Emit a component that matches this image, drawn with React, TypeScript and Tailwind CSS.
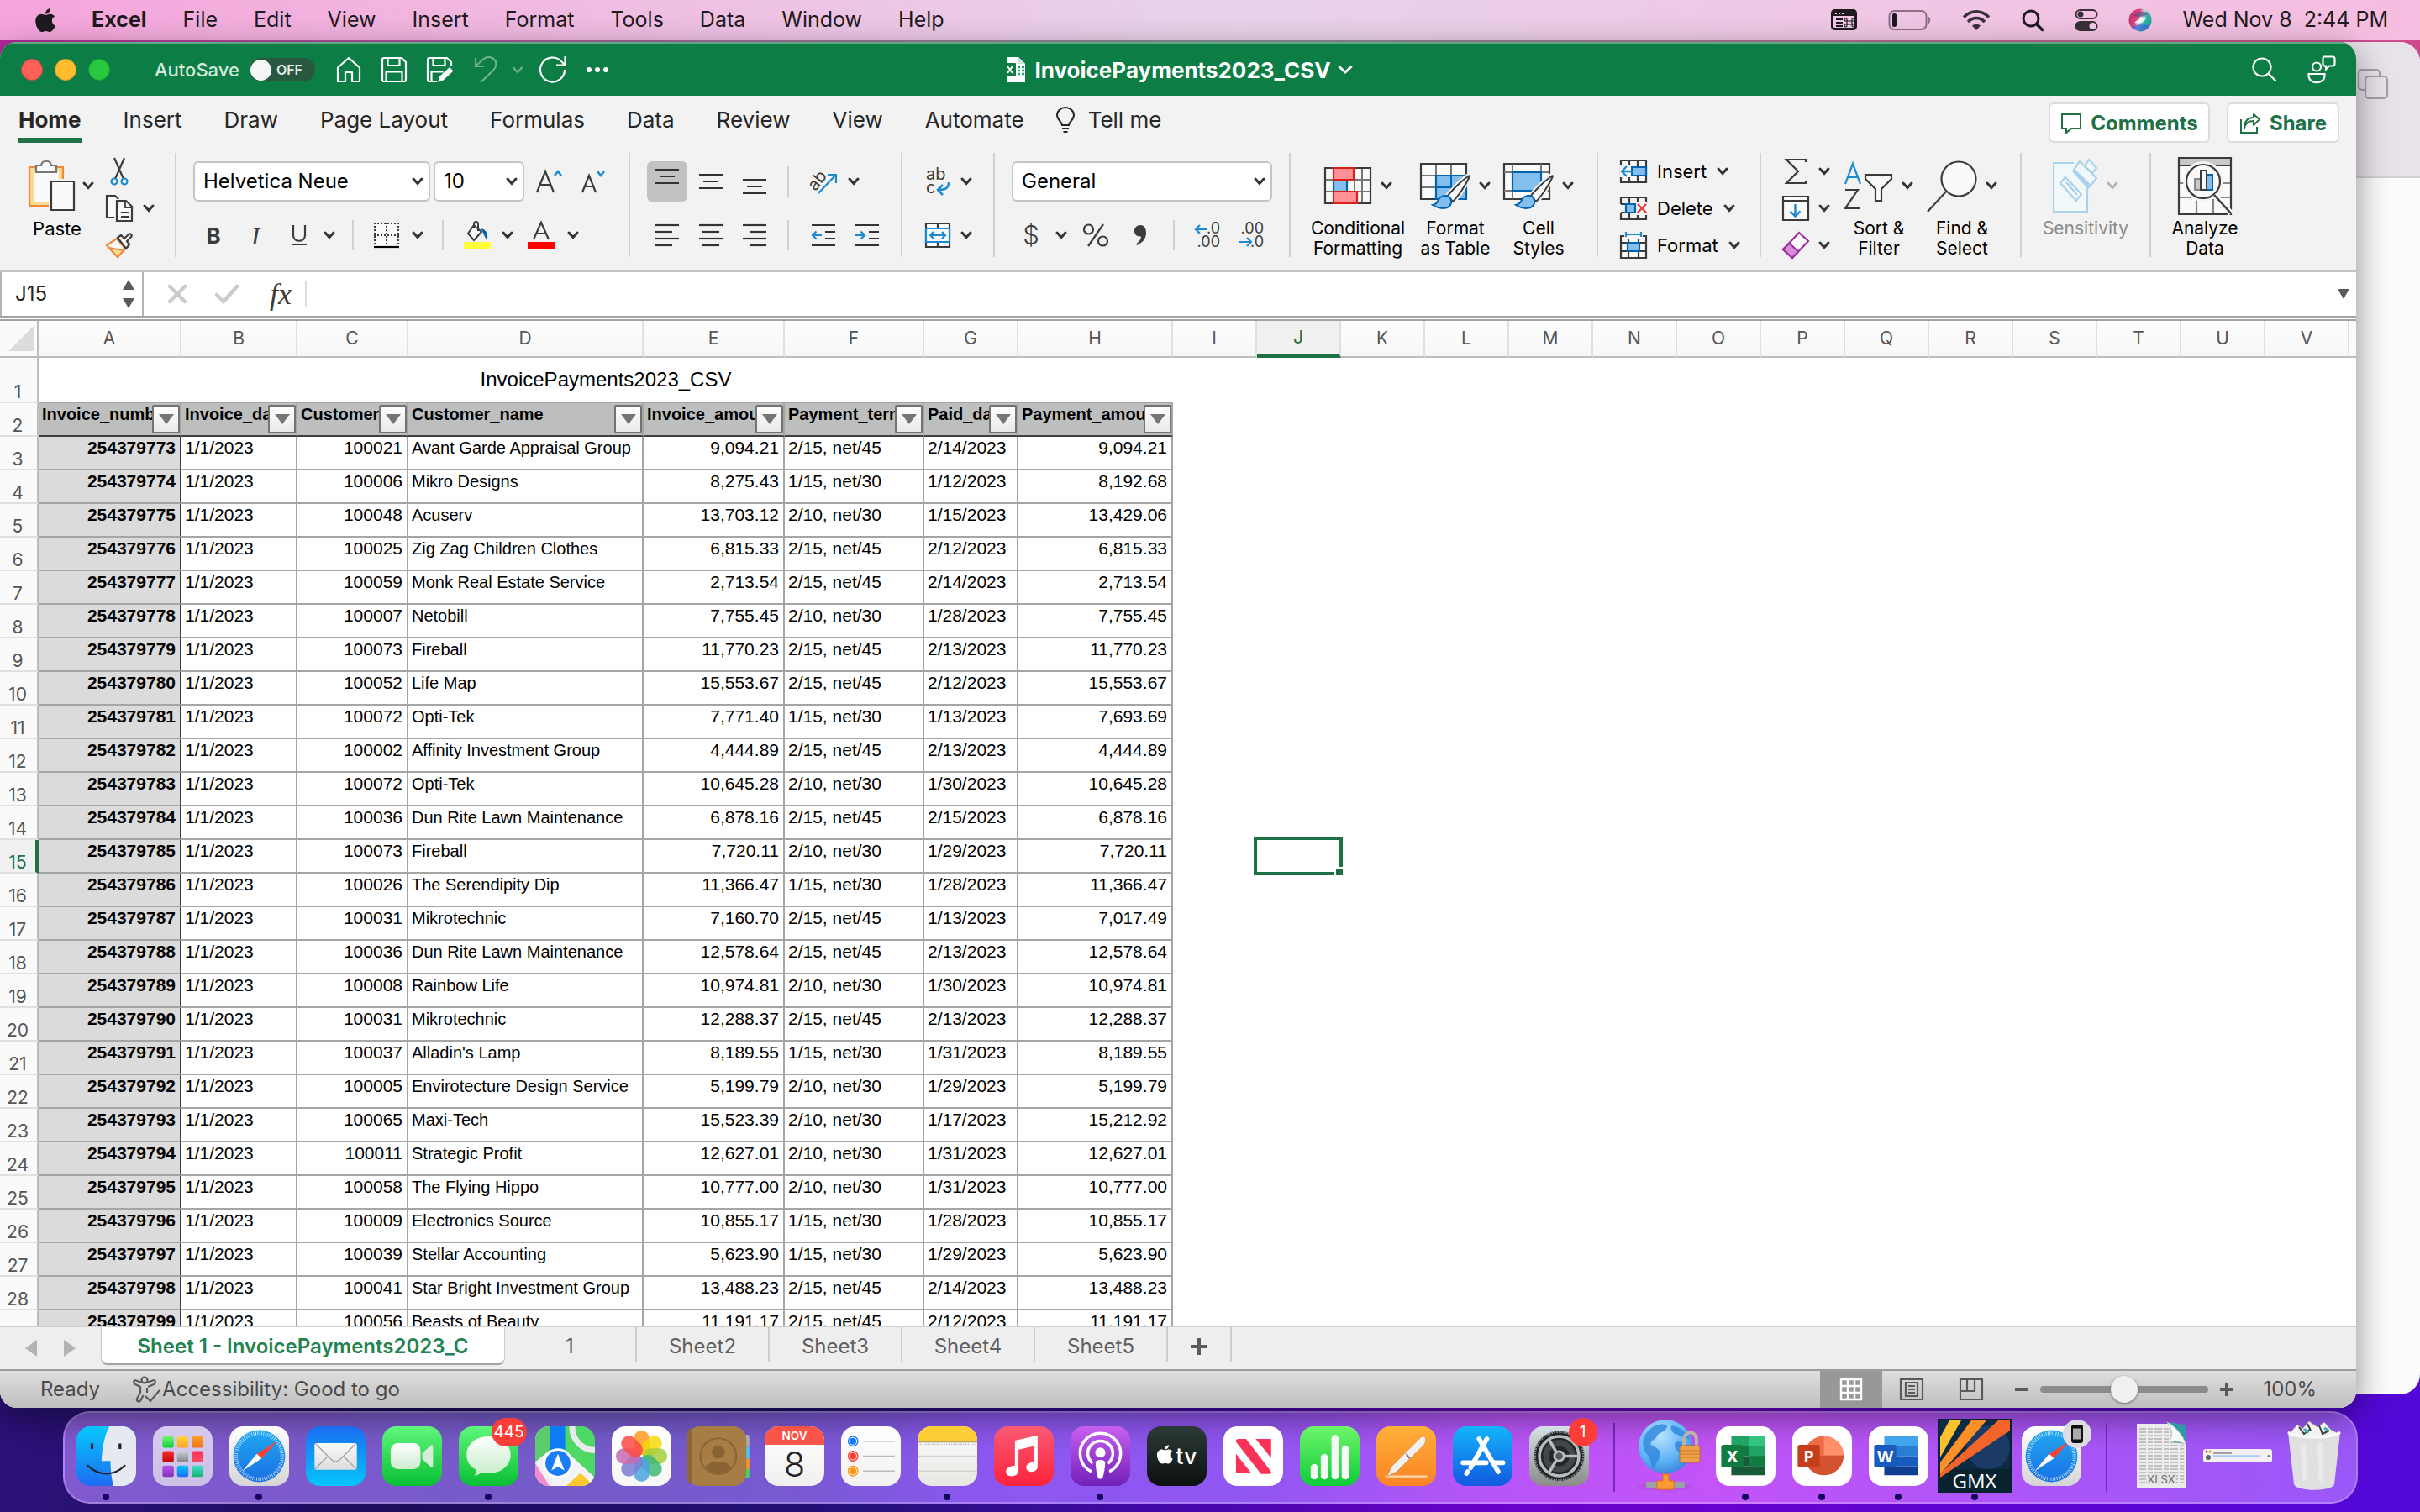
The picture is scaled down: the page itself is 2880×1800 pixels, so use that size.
import React from "react";
import { FaApple } from "react-icons/fa";

type Kids = { children?: React.ReactNode };

function Svg({ w, h, vb, label, children }: Kids & { w: number; h: number; vb?: string; label?: string }) {
  return (
    <svg
      width={w}
      height={h}
      viewBox={vb ?? `0 0 ${w} ${h}`}
      fill="none"
      className="shrink-0 overflow-visible"
      role={label ? "img" : undefined}
      aria-label={label}
      aria-hidden={label ? undefined : true}
    >
      {children}
    </svg>
  );
}

/* ------------------------------------------------------------------ */
/* Menu bar                                                            */
/* ------------------------------------------------------------------ */

const menus = ["File", "Edit", "View", "Insert", "Format", "Tools", "Data", "Window", "Help"];

function MenuBar() {
  return (
    <header className="flex h-12 shrink-0 items-center bg-linear-to-r from-[#f5a5db] via-[#e8d3ea] to-[#f5bde0] px-[38px] text-[25px] text-[#1f1a20]">
      <button aria-label="Apple menu" className="mr-[39px]">
        <FaApple size={32} />
      </button>
      <nav className="flex gap-[43px]">
        <button className="font-bold">Excel</button>
        {menus.map((m) => (
          <button key={m}>{m}</button>
        ))}
      </nav>
      <div className="ml-auto flex items-center gap-9">
        <Svg w={32} h={26} label="Keyboard viewer">
          <rect x="1.5" y="1.5" width="28" height="22" rx="3" stroke="#1f1a20" strokeWidth="3" />
          <path d="M2 2h28v6H2z" fill="#1f1a20" />
          <path d="M5 5h2M9 5h2M13 5h2" stroke="#f3d0e8" strokeWidth="2" />
          <path d="M6 12h8M6 16h8M6 20h8" stroke="#1f1a20" strokeWidth="2" />
          <path
            d="M19 14h6v4h-6zM19 14v-1.500a1.500 1.500 0 1 0-1.500 1.500zM25 14h1.500a1.500 1.500 0 1 0-1.500-1.500zM19 18v1.500a1.500 1.500 0 1 1-1.500-1.500zM25 18h1.500a1.500 1.500 0 1 1-1.500 1.500z"
            stroke="#1f1a20"
            strokeWidth="1.200"
          />
        </Svg>
        <Svg w={52} h={26} label="Battery">
          <rect x="1.500" y="2" width="44" height="22" rx="6" stroke="#8c7186" strokeWidth="2" />
          <rect x="5" y="5" width="5" height="16" rx="2" fill="#1f1a20" />
          <path d="M48 9c3 1 3 7 0 8z" fill="#8c7186" />
        </Svg>
        <Svg w={34} h={26} label="Wi-Fi">
          <path d="M2 9.500C11 .5 23 .5 32 9.500" stroke="#3a3038" strokeWidth="3.500" />
          <path d="M7 15c6-6 14-6 20 0" stroke="#3a3038" strokeWidth="3.500" />
          <path d="M17 25l-5-5.500c3-2.500 7-2.500 10 0z" fill="#3a3038" />
        </Svg>
        <Svg w={28} h={28} label="Search">
          <circle cx="12" cy="12" r="9" stroke="#1f1a20" strokeWidth="3" />
          <path d="M18.500 18.500l7 7" stroke="#1f1a20" strokeWidth="3.500" strokeLinecap="round" />
        </Svg>
        <Svg w={28} h={28} label="Control Center">
          <rect x="1.500" y="2" width="25" height="10" rx="5" stroke="#3a3038" strokeWidth="2" />
          <circle cx="7" cy="7" r="3.500" fill="#3a3038" />
          <rect x="0.500" y="15" width="27" height="12" rx="6" fill="#3a3038" />
          <circle cx="21.500" cy="21" r="4" fill="#f0cbe6" />
        </Svg>
        <Svg w={28} h={28} label="Siri">
          <defs>
            <linearGradient id="siri" x1="0" y1="0.3" x2="1" y2="0.7">
              <stop offset="0" stopColor="#c22d6e" />
              <stop offset="0.350" stopColor="#e0447e" />
              <stop offset="0.500" stopColor="#c9d4ea" />
              <stop offset="0.700" stopColor="#28b8a8" />
              <stop offset="1" stopColor="#2f8f98" />
            </linearGradient>
          </defs>
          <circle cx="14" cy="14" r="13.500" fill="url(#siri)" />
          <path d="M4 22c6 7 16 7 21-1-6-3-14-2-21 1z" fill="#3d6fd8" opacity="0.800" />
          <path d="M6 9c4-6 13-7 17-2-5 3-11 4-17 2z" fill="#5f4a78" opacity="0.700" />
          <path d="M7 17c4-4 10-7 14-6-1 5-8 8-14 6z" fill="#fff" opacity="0.850" />
        </Svg>
        <time className="whitespace-pre">Wed Nov 8  2:44 PM</time>
      </div>
    </header>
  );
}

/* ------------------------------------------------------------------ */
/* Title bar                                                           */
/* ------------------------------------------------------------------ */

function TitleBar() {
  return (
    <div className="flex h-16 shrink-0 items-center justify-between border-t-2 border-[#5fa883] bg-[#0b7d45] pr-6 pl-[25px] text-white">
      <div className="flex flex-1 items-center">
        <div className="flex gap-[14px]">
          <button aria-label="Close" className="size-[26px] rounded-full border border-[#d9463e] bg-[#ff5f57]" />
          <button aria-label="Minimize" className="size-[26px] rounded-full border border-[#d99b2b] bg-[#febc2e]" />
          <button aria-label="Full screen" className="size-[26px] rounded-full border border-[#18a033] bg-[#28c840]" />
        </div>
        <label htmlFor="autosave" className="ml-[53px] text-[22px] font-medium text-[#d3e9dc]">
          AutoSave
        </label>
        <span className="relative ml-3 flex h-7 w-[78px] items-center rounded-full bg-[#2a5740] px-px">
          <input id="autosave" type="checkbox" role="switch" className="absolute inset-0 size-full appearance-none" />
          <span className="size-[25px] rounded-full bg-[#f6f6f6]" />
          <span className="ml-[6px] text-[16px] font-semibold text-[#e3eee8]">OFF</span>
        </span>
        <div className="ml-6 flex items-center gap-[22px]">
          <button aria-label="Home">
            <Svg w={32} h={32}>
              <path d="M3 13.500L16 2l13 11.500V30h-9V19h-8v11H3z" stroke="#fff" strokeWidth="2.200" strokeLinejoin="round" />
            </Svg>
          </button>
          <button aria-label="Save">
            <Svg w={32} h={32}>
              <path d="M2 4a2 2 0 0 1 2-2h21l5 5v21a2 2 0 0 1-2 2H4a2 2 0 0 1-2-2z" stroke="#fff" strokeWidth="2.200" />
              <path d="M8.500 2v9h14V2M6.500 30V18.500h19V30" stroke="#fff" strokeWidth="2.200" />
            </Svg>
          </button>
          <button aria-label="Save as">
            <Svg w={34} h={32}>
              <path d="M13 30H4a2 2 0 0 1-2-2V4a2 2 0 0 1 2-2h21l5 5v5" stroke="#fff" strokeWidth="2.200" />
              <path d="M8.500 2v9h14V2M6.500 30V18.500h14" stroke="#fff" strokeWidth="2.200" />
              <path d="M14 31l2-7 12-11 4.500 4.500-12 11z" fill="#fff" />
            </Svg>
          </button>
          <button aria-label="Undo" className="flex items-center gap-4" disabled>
            <Svg w={30} h={34}>
              <path d="M3 3v10h10M3 13L12 4.500c8-6 17 0 15 8.500-1 3-3 5-18 19" stroke="#6bb08c" strokeWidth="2.200" />
            </Svg>
            <Svg w={14} h={10}>
              <path d="M1.500 2L7 8l5.500-6" stroke="#6bb08c" strokeWidth="2.500" />
            </Svg>
          </button>
          <button aria-label="Repeat" className="-ml-1">
            <Svg w={34} h={34}>
              <path d="M31 17a14.500 14.500 0 1 1-4-10l4 4M31.500 1v10.500H21" stroke="#fff" strokeWidth="2.200" />
            </Svg>
          </button>
          <button aria-label="More">
            <Svg w={28} h={8}>
              <circle cx="4" cy="4" r="3" fill="#fff" />
              <circle cx="14" cy="4" r="3" fill="#fff" />
              <circle cx="24" cy="4" r="3" fill="#fff" />
            </Svg>
          </button>
        </div>
      </div>
      <button className="flex items-center gap-[10px] text-[26px] font-bold">
        <Svg w={26} h={30}>
          <path d="M4 0h13l8 8v22H4z" fill="#fff" />
          <path d="M17 0v8h8z" fill="#cfe3d8" />
          <path d="M16 12h3M21 12h3M16 16h3M21 16h3M16 20h3M21 20h3" stroke="#21a366" strokeWidth="2.500" />
          <rect x="0" y="7" width="14" height="16" rx="1" fill="#107c41" />
          <path d="M4 11l6 8M10 11l-6 8" stroke="#fff" strokeWidth="2" />
        </Svg>
        <span className="flex items-center gap-2">
          InvoicePayments2023_CSV
          <Svg w={18} h={12}>
            <path d="M2 2.500L9 9l7-6.500" stroke="#fff" strokeWidth="3" strokeLinecap="round" />
          </Svg>
        </span>
      </button>
      <div className="flex flex-1 items-center justify-end gap-9">
        <button aria-label="Search">
          <Svg w={30} h={30}>
            <circle cx="12" cy="12" r="10.500" stroke="#fff" strokeWidth="2.200" />
            <path d="M20 20l8.500 8.500" stroke="#fff" strokeWidth="2.200" />
          </Svg>
        </button>
        <button aria-label="Share and comment">
          <Svg w={34} h={34}>
            <circle cx="11" cy="13.500" r="5" stroke="#fff" strokeWidth="2.200" />
            <path d="M1.500 22h19v2c0 11-19 11-19 0z" stroke="#fff" strokeWidth="2.200" />
            <path d="M20 1.500h10a2.500 2.500 0 0 1 2.500 2.500v6a2.500 2.500 0 0 1-2.500 2.500h-4l-4 4v-4h-2a2.500 2.500 0 0 1-1.500-2V4A2.500 2.500 0 0 1 20 1.500z" stroke="#fff" strokeWidth="2.200" />
          </Svg>
        </button>
      </div>
    </div>
  );
}

/* ------------------------------------------------------------------ */
/* Ribbon                                                              */
/* ------------------------------------------------------------------ */

const ribbonTabs = ["Home", "Insert", "Draw", "Page Layout", "Formulas", "Data", "Review", "View", "Automate"];

function RibbonTabs() {
  return (
    <div className="flex h-[68px] shrink-0 items-start pr-5 pl-[22px] text-[26px] text-[#262626]">
      <nav className="flex gap-[50px]">
        {ribbonTabs.map((t, i) => (
          <button
            key={t}
            className={
              i === 0
                ? "h-14 border-b-[6px] border-[#1e7145] pt-[7px] font-bold"
                : "h-14 border-b-[6px] border-transparent pt-[7px]"
            }
          >
            {t}
          </button>
        ))}
      </nav>
      <button className="ml-9 flex h-14 items-center gap-[14px] pt-px">
        <Svg w={26} h={32}>
          <path d="M9 22c0-4-6-6-6-12a10 9 0 0 1 20 0c0 6-6 8-6 12z" stroke="#262626" strokeWidth="2" />
          <path d="M9 26h8M10.500 30h5" stroke="#262626" strokeWidth="2.200" />
        </Svg>
        Tell me
      </button>
      <div className="mt-2 ml-auto flex gap-5 text-[24px] font-bold text-[#1e7145]">
        <button className="flex h-12 w-[192px] items-center justify-center gap-[10px] rounded-[6px] border-2 border-[#dcdcdc] bg-white pt-0.5">
          <Svg w={26} h={26}>
            <path d="M2 2h22v17H13l-6 5v-5H2z" stroke="#1e7145" strokeWidth="2" />
          </Svg>
          Comments
        </button>
        <button className="flex h-12 w-[134px] items-center justify-center gap-[10px] rounded-[6px] border-2 border-[#dcdcdc] bg-white pt-0.5">
          <Svg w={26} h={26}>
            <path d="M2 8v16h19v-7" stroke="#1e7145" strokeWidth="2" />
            <path d="M6 19c1-7 5-9 11-9v5l7-7-7-6v4C9 6 6 11 6 19z" stroke="#1e7145" strokeWidth="2" strokeLinejoin="round" />
          </Svg>
          Share
        </button>
      </div>
    </div>
  );
}

function Chevron({ color = "#333" }: { color?: string }) {
  return (
    <Svg w={14} h={10}>
      <path d="M2 2l5 5.500L12 2" stroke={color} strokeWidth="3" strokeLinecap="round" />
    </Svg>
  );
}

function Group({ className, children }: Kids & { className: string }) {
  return <div className={`flex h-[124px] shrink-0 border-r-2 border-[#d0d0d0] ${className}`}>{children}</div>;
}

function TwoRows({ children }: Kids) {
  return <div className="flex flex-col gap-4 pt-[10px]">{children}</div>;
}

function Row({ children, className = "" }: Kids & { className?: string }) {
  return <div className={`flex h-12 items-center ${className}`}>{children}</div>;
}

function Slot({ label, className, children }: Kids & { label: string; className: string }) {
  return (
    <button aria-label={label} className={`flex h-12 items-center justify-center ${className}`}>
      {children}
    </button>
  );
}

function Divider({ className }: { className: string }) {
  return <span className={`h-9 w-0.5 bg-[#d0d0d0] ${className}`} />;
}

function Picker({ label, value, className }: { label: string; value: string; className: string }) {
  return (
    <span className={`relative flex h-12 items-center ${className}`}>
      <select
        aria-label={label}
        defaultValue={value}
        className="size-full appearance-none rounded-[6px] border-2 border-[#c4c4c4] bg-white pl-[10px] text-[24px] text-black"
      >
        <option>{value}</option>
      </select>
      <span className="pointer-events-none absolute right-2">
        <Chevron />
      </span>
    </span>
  );
}

function BigButton({
  icon,
  lines,
  className,
  menu = true,
  disabled = false,
}: {
  icon: React.ReactNode;
  lines: string[];
  className: string;
  menu?: boolean;
  disabled?: boolean;
}) {
  return (
    <button
      disabled={disabled}
      className={`flex flex-col items-center text-[21px] leading-6 whitespace-nowrap ${disabled ? "text-[#8a8a8a]" : "text-black"} ${className}`}
    >
      <span className="flex h-[78px] shrink-0 items-center gap-[10px]">
        {icon}
        {menu && <Chevron color={disabled ? "#b5b5b5" : "#333"} />}
      </span>
      {lines.map((l) => (
        <span key={l}>{l}</span>
      ))}
    </button>
  );
}

/* Horizontal rules, each given as [x, y, width]. */
function Lines({ rows, h = 28 }: { rows: [number, number, number][]; h?: number }) {
  return (
    <Svg w={30} h={h}>
      {rows.map(([x, y, w], i) => (
        <path key={i} d={`M${x} ${y}h${w}`} stroke="#333" strokeWidth="2.200" />
      ))}
    </Svg>
  );
}

function PaintBrush() {
  return (
    <g transform="translate(14 9)">
      <path d="M44 0C34 7 22 20 18 25c2 1 5 3 7 6C31 25 40 12 44 2c1-2 1-2 0-2z" fill="#fafafa" stroke="#f0f0f0" strokeWidth="6" />
      <path d="M44 .5C34 7 22 20 18 25c2 1 5 3 7 6C31 25 40 12 44.500 2c.5-1.500.5-2-.5-1.500z" fill="#fafafa" stroke="#3b3b3b" strokeWidth="2" />
      <path d="M17 24c4 0 7 4 6 9-2 7-13 8-22 2 5-1 5-3 7-6 1-3 5-5 9-5z" fill="#83beec" stroke="#0063b1" strokeWidth="2" />
    </g>
  );
}

function RibbonGroups() {
  return (
    <div className="flex h-[142px] shrink-0 items-start border-b-2 border-[#c4c4c4]">
      <Group className="w-[210px] pl-[34px]">
        <button className="flex w-[78px] flex-col text-[22px] leading-6 text-black">
          <span className="flex h-[78px] items-center gap-2">
            <Svg w={56} h={62}>
              <path d="M1 9h40v46H1z" fill="#f8db8f" stroke="#f0883a" strokeWidth="2.200" />
              <path d="M6 13h30v37H6z" fill="#fafafa" />
              <path d="M9 15V7h6c1-7 11-7 12 0h6v8z" fill="#fafafa" stroke="#777" strokeWidth="2.200" />
              <path d="M24 23h32v39H24z" fill="#f2f2f2" />
              <path d="M27 26h27v34H27z" fill="#fafafa" stroke="#3b3b3b" strokeWidth="2.200" />
            </Svg>
            <Chevron />
          </span>
          <span className="w-[68px] text-center">Paste</span>
        </button>
        <div className="ml-[14px] flex flex-col">
          <button aria-label="Cut" className="flex h-11 w-8 shrink-0 items-center justify-center">
            <Svg w={22} h={34}>
              <path d="M5 1l11 25M17 1L6 26" stroke="#3b3b3b" strokeWidth="2.200" />
              <circle cx="5" cy="29" r="3.500" stroke="#1b8ad0" strokeWidth="2.200" />
              <circle cx="17" cy="29" r="3.500" stroke="#1b8ad0" strokeWidth="2.200" />
            </Svg>
          </button>
          <button aria-label="Copy" className="flex h-11 shrink-0 items-center gap-3">
            <Svg w={32} h={34}>
              <path d="M10 28H1V2h10l4 4" fill="#fafafa" stroke="#3b3b3b" strokeWidth="2.200" />
              <path d="M13 8h11l7 7v17H13z" fill="#fafafa" stroke="#3b3b3b" strokeWidth="2.200" />
              <path d="M23 8v8h8M18 22h9M18 27h9" stroke="#3b3b3b" strokeWidth="1.800" />
            </Svg>
            <Chevron />
          </button>
          <button aria-label="Format painter" className="flex h-11 w-8 shrink-0 items-center justify-center">
            <Svg w={32} h={30}>
              <path d="M1 15l12-8 10 12-9 10z" fill="#fafafa" stroke="#f0883a" strokeWidth="2.200" />
              <path d="M4 18l17 3-7 8z" fill="#f8db8f" stroke="#f0883a" strokeWidth="1.800" />
              <path d="M14 6l4-3 4 4 5-5c2-2 5 1 3 3l-5 5 3 4-4 5z" fill="#fafafa" stroke="#3b3b3b" strokeWidth="2.200" />
            </Svg>
          </button>
        </div>
      </Group>

      <Group className="w-[540px] pl-[20px]">
        <TwoRows>
          <Row>
            <Picker label="Font" value="Helvetica Neue" className="w-[282px]" />
            <Picker label="Font size" value="10" className="ml-1 w-[108px]" />
            <Slot label="Increase font size" className="ml-3 w-9">
              <Svg w={34} h={30}>
                <path d="M2 28L12 3l10 25M6 19h12" stroke="#3b3b3b" strokeWidth="2.200" />
                <path d="M23 8l4-5 4 5" stroke="#1b8ad0" strokeWidth="2.500" />
              </Svg>
            </Slot>
            <Slot label="Decrease font size" className="ml-4 w-9">
              <Svg w={30} h={30}>
                <path d="M2 28l8-20 8 20M5 21h10" stroke="#3b3b3b" strokeWidth="2.200" />
                <path d="M20 3l4 5 4-5" stroke="#1b8ad0" strokeWidth="2.500" />
              </Svg>
            </Slot>
          </Row>
          <Row className="text-[#3b3b3b]">
            <Slot label="Bold" className="w-12 text-[26px] font-bold">
              <span>B</span>
            </Slot>
            <Slot label="Italic" className="w-[52px] font-['Liberation_Serif'] text-[30px] italic">
              <span>I</span>
            </Slot>
            <Slot label="Underline" className="w-[52px]">
              <Svg w={20} h={30}>
                <path d="M3 3v12c0 9 14 9 14 0V3M1 26h18" stroke="#3b3b3b" strokeWidth="2.200" />
              </Svg>
            </Slot>
            <Slot label="Underline style" className="w-5">
              <Chevron />
            </Slot>
            <Divider className="mx-[17px]" />
            <Slot label="Borders" className="w-11">
              <Svg w={30} h={30}>
                <path d="M0 0h30v28H0z" fill="#fafafa" />
                <path d="M0 1h30M1 0v26M29 0v26M15 0v26M0 15h30" stroke="#3b3b3b" strokeWidth="2" strokeDasharray="2 2" />
                <path d="M0 29h30" stroke="#000" strokeWidth="2.200" />
              </Svg>
            </Slot>
            <Slot label="Border style" className="w-[30px]">
              <Chevron />
            </Slot>
            <Divider className="mx-[14px]" />
            <Slot label="Fill color" className="w-[52px]">
              <Svg w={32} h={34}>
                <path d="M12 5l9 8-9 10-7-8zM12 9V4c0-4 5-4 5 0v8" fill="#fafafa" stroke="#3b3b3b" strokeWidth="2" />
                <path d="M20 9c6 1 9 5 8 13-4-2-3-6-8-13z" fill="#0063b1" />
                <path d="M0 25h32v8H0z" fill="#ffff38" />
              </Svg>
            </Slot>
            <Slot label="Fill color menu" className="w-5">
              <Chevron />
            </Slot>
            <Slot label="Font color" className="w-[60px]">
              <Svg w={32} h={34}>
                <path d="M7 22l9-20 9 20M10.500 15h11" stroke="#3b3b3b" strokeWidth="2.200" />
                <path d="M0 25h32v8H0z" fill="#ff0000" />
              </Svg>
            </Slot>
            <Slot label="Font color menu" className="w-4">
              <Chevron />
            </Slot>
          </Row>
        </TwoRows>
      </Group>

      <Group className="w-[324px] pl-[18px]">
        <TwoRows>
          <Row>
            <Slot label="Align top" className="mx-0.5 w-12 rounded-[6px] bg-[#c2c2c2]">
              <Lines rows={[[1, 2, 28], [6, 10, 18], [1, 18, 28]]} h={32} />
            </Slot>
            <Slot label="Align middle" className="w-[52px]">
              <Lines rows={[[1, 8, 28], [6, 16, 18], [1, 24, 28]]} h={32} />
            </Slot>
            <Slot label="Align bottom" className="w-[52px]">
              <Lines rows={[[1, 14, 28], [6, 22, 18], [1, 30, 28]]} h={32} />
            </Slot>
            <Divider className="mx-[13px]" />
            <Slot label="Orientation" className="w-[56px]">
              <Svg w={34} h={32}>
                <text x="2" y="23" transform="rotate(-52 10 20)" fontSize="20" fill="#3b3b3b" fontFamily="Inter">
                  ab
                </text>
                <path d="M11 30L31 9M22 8h10v10" stroke="#1b8ad0" strokeWidth="2.200" />
              </Svg>
            </Slot>
            <Slot label="Orientation menu" className="w-4">
              <Chevron />
            </Slot>
          </Row>
          <Row>
            <Slot label="Align left" className="w-[52px]">
              <Lines rows={[[1, 2, 28], [1, 10, 20], [1, 18, 28], [1, 26, 20]]} />
            </Slot>
            <Slot label="Align center" className="w-[52px]">
              <Lines rows={[[1, 2, 28], [5, 10, 20], [1, 18, 28], [5, 26, 20]]} />
            </Slot>
            <Slot label="Align right" className="w-[52px]">
              <Lines rows={[[1, 2, 28], [9, 10, 20], [1, 18, 28], [9, 26, 20]]} />
            </Slot>
            <Divider className="mx-[13px]" />
            <Slot label="Decrease indent" className="w-[56px]">
              <Svg w={30} h={28}>
                <path d="M1 2h28M17 10h12M17 18h12M1 26h28" stroke="#333" strokeWidth="2.200" />
                <path d="M13 14H2M6.500 9.500L2 14l4.500 4.500" stroke="#1b8ad0" strokeWidth="2.200" />
              </Svg>
            </Slot>
            <Slot label="Increase indent" className="w-12">
              <Svg w={30} h={28}>
                <path d="M1 2h28M17 10h12M17 18h12M1 26h28" stroke="#333" strokeWidth="2.200" />
                <path d="M1 14h11M7.500 9.500L12 14l-4.500 4.500" stroke="#1b8ad0" strokeWidth="2.200" />
              </Svg>
            </Slot>
          </Row>
        </TwoRows>
      </Group>

      <Group className="w-[110px] pl-[16px]">
        <TwoRows>
          <Row>
            <Slot label="Wrap text" className="w-[52px]">
              <Svg w={32} h={34}>
                <text x="2" y="15" fontSize="20" fill="#3b3b3b" fontFamily="Inter">
                  ab
                </text>
                <text x="2" y="31" fontSize="20" fill="#3b3b3b" fontFamily="Inter">
                  c
                </text>
                <path d="M29 18c0 7-4 9-12 9M22 21l-6 6 6 6" stroke="#1b8ad0" strokeWidth="2.500" />
              </Svg>
            </Slot>
            <Slot label="Wrap text menu" className="w-4">
              <Chevron />
            </Slot>
          </Row>
          <Row>
            <Slot label="Merge cells" className="w-[52px]">
              <Svg w={32} h={30}>
                <path d="M2 1h28v28H2zM16 1v6M16 23v6" fill="#fafafa" stroke="#3b3b3b" strokeWidth="2.200" />
                <path d="M2 7h28v16H2z" fill="#fafafa" stroke="#1b8ad0" strokeWidth="2.200" />
                <path d="M7 15h18M11 11l-4 4 4 4M21 11l4 4-4 4" stroke="#1b8ad0" strokeWidth="2.200" />
              </Svg>
            </Slot>
            <Slot label="Merge menu" className="w-4">
              <Chevron />
            </Slot>
          </Row>
        </TwoRows>
      </Group>

      <Group className="w-[352px] pl-[20px]">
        <TwoRows>
          <Row>
            <Picker label="Number format" value="General" className="w-[310px]" />
          </Row>
          <Row className="text-[#3b3b3b]">
            <Slot label="Accounting format" className="w-[46px] text-[31px] font-light">
              <span>$</span>
            </Slot>
            <Slot label="Accounting menu" className="w-[26px]">
              <Chevron />
            </Slot>
            <Slot label="Percent style" className="w-[56px]">
              <Svg w={32} h={30}>
                <circle cx="7.500" cy="8" r="5.500" stroke="#3b3b3b" strokeWidth="2.200" />
                <circle cx="24.500" cy="22" r="5.500" stroke="#3b3b3b" strokeWidth="2.200" />
                <path d="M25 2L7 28" stroke="#3b3b3b" strokeWidth="2.200" />
              </Svg>
            </Slot>
            <Slot label="Comma style" className="w-[50px]">
              <Svg w={16} h={26}>
                <path d="M8 1c5 0 7 4 7 9 0 8-5 12-11 15l-1-1.500c4-3 6-6 6-9C4 15 1 12 1 8s3-7 7-7z" fill="#3b3b3b" />
              </Svg>
            </Slot>
            <Divider className="mx-[14px]" />
            <Slot label="Increase decimal" className="w-[52px]">
              <Svg w={34} h={34}>
                <path d="M15 10H2M7 5l-5 5 5 5" stroke="#1b8ad0" strokeWidth="2.200" />
                <text x="31" y="15" textAnchor="end" fontSize="18" fill="#3b3b3b" fontFamily="Inter">
                  .0
                </text>
                <text x="31" y="31" textAnchor="end" fontSize="18" fill="#3b3b3b" fontFamily="Inter">
                  .00
                </text>
              </Svg>
            </Slot>
            <Slot label="Decrease decimal" className="w-[52px]">
              <Svg w={34} h={34}>
                <path d="M2 25h14M11 20l5 5-5 5" stroke="#1b8ad0" strokeWidth="2.200" />
                <text x="31" y="15" textAnchor="end" fontSize="18" fill="#3b3b3b" fontFamily="Inter">
                  .00
                </text>
                <text x="31" y="31" textAnchor="end" fontSize="18" fill="#3b3b3b" fontFamily="Inter">
                  .0
                </text>
              </Svg>
            </Slot>
          </Row>
        </TwoRows>
      </Group>

      <Group className="w-[366px] pl-[20px]">
        <BigButton
          className="w-[120px]"
          lines={["Conditional", "Formatting"]}
          icon={
            <Svg w={58} h={46}>
              <path d="M2 2h54v42H2z" fill="#fafafa" />
              <path d="M12 2v42M46 2v42M2 16h54M2 30h54M37 16v14" stroke="#777" strokeWidth="2" />
              <path d="M2 2h54v42H2z" stroke="#3b3b3b" strokeWidth="2.200" />
              <path d="M12 16h16v14H12z" fill="#83beec" />
              <path d="M28 16v14M12 16v14" stroke="#0063b1" strokeWidth="2.200" />
              <path d="M12 2h24v14H12zM12 30h28v14H12z" fill="#ff9196" stroke="#d92217" strokeWidth="2.200" />
            </Svg>
          }
        />
        <BigButton
          className="w-[112px]"
          lines={["Format", "as Table"]}
          icon={
            <Svg w={60} h={56} vb="0 -7 60 56">
              <path d="M1 -5h54v42H1z" fill="#fafafa" />
              <path d="M19 -5v42M37 -5v14M1 9h54M1 23h18" stroke="#777" strokeWidth="2" />
              <path d="M19 37H1V-5h54v14" stroke="#3b3b3b" strokeWidth="2.200" />
              <path d="M19 9h36v28H19z" fill="#83beec" stroke="#0063b1" strokeWidth="2.200" />
              <path d="M37 9v28M19 23h36" stroke="#0063b1" strokeWidth="2" />
              <PaintBrush />
            </Svg>
          }
        />
        <BigButton
          className="w-[86px]"
          lines={["Cell", "Styles"]}
          icon={
            <Svg w={60} h={56} vb="0 -7 60 56">
              <path d="M1 -5h54v42H1z" fill="#fafafa" stroke="#3b3b3b" strokeWidth="2.200" />
              <path d="M11 -5v42M45 -5v42M1 5h54M1 27h54" stroke="#777" strokeWidth="2" />
              <path d="M11 5h34v22H11z" fill="#83beec" stroke="#0063b1" strokeWidth="2.200" />
              <PaintBrush />
            </Svg>
          }
        />
      </Group>

      <Group className="w-[194px] pl-[26px]">
        <div className="flex flex-col text-[22px] text-black">
          <button className="flex h-11 shrink-0 items-center gap-3">
            <Svg w={32} h={28}>
              <path d="M1 1h30v26H1zM11 1v26M21 1v26M1 9h30M1 19h30" fill="#fafafa" stroke="#3b3b3b" strokeWidth="2.200" />
              <path d="M14 9h17v10H14z" fill="#83beec" stroke="#0063b1" strokeWidth="2.200" />
              <path d="M0 7h13v14H0z" fill="#f5f5f5" />
              <path d="M15 14H2M8 8l-6 6 6 6" stroke="#1b8ad0" strokeWidth="2.400" />
            </Svg>
            Insert
            <Chevron />
          </button>
          <button className="flex h-11 shrink-0 items-center gap-3">
            <Svg w={32} h={28}>
              <path d="M1 9V1h30v8M1 19v8h30v-8M1 9h18M1 19h18M11 1v8M21 1v6M11 19v8M21 21v6" stroke="#3b3b3b" strokeWidth="2.200" />
              <path d="M7 9h11v10H7z" fill="#83beec" stroke="#0063b1" strokeWidth="2.200" />
              <path d="M19 6h13v16H19z" fill="#f2f2f2" />
              <path d="M21 9l10 10M31 9L21 19" stroke="#e8383d" strokeWidth="2.400" />
            </Svg>
            Delete
            <Chevron />
          </button>
          <button className="flex h-11 shrink-0 items-center gap-3">
            <Svg w={32} h={32}>
              <path d="M1 5h30v26H1z" fill="#fafafa" />
              <path d="M5 5H1v26h30V5h-4M10 8v23M22 8v23M1 13h30M1 23h30" stroke="#3b3b3b" strokeWidth="2.200" />
              <path d="M9 13h14v10H9z" fill="#83beec" stroke="#0063b1" strokeWidth="2.200" />
              <path d="M7 3h18M7 0v6M25 0v6" stroke="#1b8ad0" strokeWidth="2.200" />
            </Svg>
            Format
            <Chevron />
          </button>
        </div>
      </Group>

      <Group className="w-[310px] pl-6">
        <div className="flex w-[68px] flex-col">
          <button aria-label="AutoSum" className="flex h-11 shrink-0 items-center justify-between pr-[10px] pl-1">
            <Svg w={26} h={30}>
              <path d="M25 4V1H2l14 14L2 29h23v-3" stroke="#3b3b3b" strokeWidth="2.200" />
            </Svg>
            <Chevron />
          </button>
          <button aria-label="Fill" className="flex h-11 shrink-0 items-center justify-between pr-[10px] pl-px">
            <Svg w={32} h={30}>
              <path d="M1 1h30v28H1zM1 6h30" fill="#fafafa" stroke="#3b3b3b" strokeWidth="2.200" />
              <path d="M15.500 10v14M9.500 18.500l6 6 6-6" stroke="#1b8ad0" strokeWidth="2.400" />
            </Svg>
            <Chevron />
          </button>
          <button aria-label="Clear" className="flex h-11 shrink-0 items-center justify-between pr-[10px] pl-px">
            <Svg w={32} h={32}>
              <path d="M20 1l11 10-19 20L1 21z" fill="#fafafa" stroke="#9b2fa0" strokeWidth="2.200" />
              <path d="M8.500 13.500l10.500 10-7 7.500L1 21z" fill="#d88fd8" stroke="#9b2fa0" strokeWidth="2.200" />
            </Svg>
            <Chevron />
          </button>
        </div>
        <BigButton
          className="w-[96px]"
          lines={["Sort &", "Filter"]}
          icon={
            <Svg w={58} h={58}>
              <path d="M1 27L10 3l9 24M4 19h12" stroke="#1b8ad0" strokeWidth="2.200" />
              <path d="M1 34h15L1 56h17" stroke="#3b3b3b" strokeWidth="2.200" />
              <path d="M25 16h31v5L44 33v14h-7V33L25 21z" fill="#fafafa" stroke="#3b3b3b" strokeWidth="2.200" />
            </Svg>
          }
        />
        <BigButton
          className="w-[102px]"
          lines={["Find &", "Select"]}
          icon={
            <Svg w={60} h={66}>
              <circle cx="38" cy="25" r="20.500" fill="#fafafa" stroke="#3b3b3b" strokeWidth="2.200" />
              <path d="M23 40L1 64" stroke="#3b3b3b" strokeWidth="2.200" />
            </Svg>
          }
        />
      </Group>

      <Group className="w-[154px]">
        <BigButton
          disabled
          className="w-full"
          lines={["Sensitivity"]}
          icon={
            <Svg w={54} h={66}>
              <path d="M25 6H1v58h40V34" fill="#f2f7fa" stroke="#a8d3ea" strokeWidth="2.200" />
              <path d="M15 23L34 43l-6 8L9 30zM16 29l13 15" stroke="#a8d3ea" strokeWidth="2.200" />
              <path d="M25 14l7-10 20 20-7 9z" fill="#f0f6fa" stroke="#a8d3ea" strokeWidth="2.200" />
              <path d="M23 16l3-3 20 20-4 4z" fill="#a8d3ea" />
              <path d="M38 10l5-8 9 10-5 6z" fill="#f0f6fa" stroke="#a8d3ea" strokeWidth="2.200" />
            </Svg>
          }
        />
      </Group>

      <BigButton
        className="w-[128px]"
        menu={false}
        lines={["Analyze", "Data"]}
        icon={
          <Svg w={66} h={70}>
            <path d="M2 2h62v67H2z" fill="#fafafa" />
            <path d="M2 2h62v9H2z" fill="#c8c8c8" />
            <path d="M2 32h62M2 49h62M23 49v20M43 49v20" stroke="#888" strokeWidth="2.200" />
            <path d="M2 11h62M2 2h62v67H2z" stroke="#3b3b3b" strokeWidth="2.200" />
            <circle cx="31" cy="30" r="24" fill="#f4f4f4" />
            <circle cx="31" cy="30" r="20" fill="#fafafa" stroke="#3b3b3b" strokeWidth="2.200" />
            <path d="M21 27h7v13h-7z" fill="#c8c8c8" stroke="#888" strokeWidth="2" />
            <path d="M35 22h7v18h-7z" fill="#83beec" stroke="#0063b1" strokeWidth="2" />
            <path d="M28 17h7v23h-7z" fill="#fafafa" stroke="#3b3b3b" strokeWidth="2" />
            <path d="M44 46l20 22" stroke="#fafafa" strokeWidth="7" />
            <path d="M44 46l20 22" stroke="#3b3b3b" strokeWidth="2.500" />
          </Svg>
        }
      />
    </div>
  );
}

/* ------------------------------------------------------------------ */
/* Formula bar                                                         */
/* ------------------------------------------------------------------ */

function FormulaBar() {
  return (
    <div className="flex h-[58px] shrink-0 items-stretch border-b-[6px] border-double border-[#a3a3a3] bg-white">
      <div className="flex w-[171px] items-center justify-between border-r-2 border-l-2 border-[#b3b3b3] pr-2 pl-4">
        <input aria-label="Name box" defaultValue="J15" className="w-24 bg-transparent text-[24px] text-[#262626]" />
        <Svg w={16} h={36}>
          <path d="M8 1l7 12H1zM8 35l7-12H1z" fill="#5a5a5a" />
        </Svg>
      </div>
      <div className="flex items-center pl-7">
        <button aria-label="Cancel">
          <Svg w={24} h={24}>
            <path d="M3 3l18 18M21 3L3 21" stroke="#cbcbcb" strokeWidth="4.500" strokeLinecap="round" />
          </Svg>
        </button>
        <button aria-label="Enter" className="ml-8">
          <Svg w={30} h={24}>
            <path d="M3 13l8 8L27 3" stroke="#cbcbcb" strokeWidth="4.500" strokeLinecap="round" />
          </Svg>
        </button>
        <button
          aria-label="Insert function"
          className="ml-9 font-['Liberation_Serif'] text-[36px] leading-9 text-[#3b3b3b] italic"
        >
          fx
        </button>
      </div>
      <span className="my-[10px] ml-4 w-0.5 bg-[#dedede]" />
      <input aria-label="Formula" className="min-w-0 flex-1 bg-transparent px-3 text-[24px]" />
      <button aria-label="Expand formula bar" className="mr-2 flex items-center">
        <Svg w={14} h={12}>
          <path d="M0 0h14L7 12z" fill="#5a5a5a" />
        </Svg>
      </button>
    </div>
  );
}

/* ------------------------------------------------------------------ */
/* Sheet                                                               */
/* ------------------------------------------------------------------ */

const invoices: [string, string, string, string, string, string, string][] = [
  ["254379773", "100021", "Avant Garde Appraisal Group", "9,094.21", "2/15, net/45", "2/14/2023", "9,094.21"],
  ["254379774", "100006", "Mikro Designs", "8,275.43", "1/15, net/30", "1/12/2023", "8,192.68"],
  ["254379775", "100048", "Acuserv", "13,703.12", "2/10, net/30", "1/15/2023", "13,429.06"],
  ["254379776", "100025", "Zig Zag Children Clothes", "6,815.33", "2/15, net/45", "2/12/2023", "6,815.33"],
  ["254379777", "100059", "Monk Real Estate Service", "2,713.54", "2/15, net/45", "2/14/2023", "2,713.54"],
  ["254379778", "100007", "Netobill", "7,755.45", "2/10, net/30", "1/28/2023", "7,755.45"],
  ["254379779", "100073", "Fireball", "11,770.23", "2/15, net/45", "2/13/2023", "11,770.23"],
  ["254379780", "100052", "Life Map", "15,553.67", "2/15, net/45", "2/12/2023", "15,553.67"],
  ["254379781", "100072", "Opti-Tek", "7,771.40", "1/15, net/30", "1/13/2023", "7,693.69"],
  ["254379782", "100002", "Affinity Investment Group", "4,444.89", "2/15, net/45", "2/13/2023", "4,444.89"],
  ["254379783", "100072", "Opti-Tek", "10,645.28", "2/10, net/30", "1/30/2023", "10,645.28"],
  ["254379784", "100036", "Dun Rite Lawn Maintenance", "6,878.16", "2/15, net/45", "2/15/2023", "6,878.16"],
  ["254379785", "100073", "Fireball", "7,720.11", "2/10, net/30", "1/29/2023", "7,720.11"],
  ["254379786", "100026", "The Serendipity Dip", "11,366.47", "1/15, net/30", "1/28/2023", "11,366.47"],
  ["254379787", "100031", "Mikrotechnic", "7,160.70", "2/15, net/45", "1/13/2023", "7,017.49"],
  ["254379788", "100036", "Dun Rite Lawn Maintenance", "12,578.64", "2/15, net/45", "2/13/2023", "12,578.64"],
  ["254379789", "100008", "Rainbow Life", "10,974.81", "2/10, net/30", "1/30/2023", "10,974.81"],
  ["254379790", "100031", "Mikrotechnic", "12,288.37", "2/15, net/45", "2/13/2023", "12,288.37"],
  ["254379791", "100037", "Alladin's Lamp", "8,189.55", "1/15, net/30", "1/31/2023", "8,189.55"],
  ["254379792", "100005", "Envirotecture Design Service", "5,199.79", "2/10, net/30", "1/29/2023", "5,199.79"],
  ["254379793", "100065", "Maxi-Tech", "15,523.39", "2/10, net/30", "1/17/2023", "15,212.92"],
  ["254379794", "100011", "Strategic Profit", "12,627.01", "2/10, net/30", "1/31/2023", "12,627.01"],
  ["254379795", "100058", "The Flying Hippo", "10,777.00", "2/10, net/30", "1/31/2023", "10,777.00"],
  ["254379796", "100009", "Electronics Source", "10,855.17", "1/15, net/30", "1/28/2023", "10,855.17"],
  ["254379797", "100039", "Stellar Accounting", "5,623.90", "1/15, net/30", "1/29/2023", "5,623.90"],
  ["254379798", "100041", "Star Bright Investment Group", "13,488.23", "2/15, net/45", "2/14/2023", "13,488.23"],
  ["254379799", "100056", "Beasts of Beauty", "11,191.17", "2/15, net/45", "2/12/2023", "11,191.17"],
];

const letters = "ABCDEFGHIJKLMNOPQRSTUV".split("");
const fields = [
  "Invoice_number",
  "Invoice_date",
  "Customer_id",
  "Customer_name",
  "Invoice_amount",
  "Payment_terms",
  "Paid_date",
  "Payment_amount",
];

const cell = "h-10 overflow-hidden border-r-2 border-b-2 border-[#a5a5a5] align-top whitespace-nowrap";
const left = `${cell} pl-1`;
const right = `${cell} pr-[5px] text-right`;

function RowNumber({ n, className = "h-10" }: { n: number; className?: string }) {
  const active = n === 15;
  return (
    <th
      scope="row"
      className={
        active
          ? `${className} border-r-4 border-b-2 border-r-[#1e7145] border-b-[#e0e0e0] bg-[#f0f0f0] pr-0 text-center align-bottom font-['Inter'] text-[21px] leading-[22px] font-normal text-[#1e7145]`
          : `${className} border-r-2 border-b-2 border-r-[#bdbdbd] border-b-[#e0e0e0] bg-[#fafafa] pr-0.5 text-center align-bottom font-['Inter'] text-[21px] leading-[22px] font-normal text-[#555]`
      }
    >
      {n}
    </th>
  );
}

function Sheet() {
  return (
    <div className="min-h-0 flex-1 overflow-hidden bg-white">
      <table className="w-full table-fixed border-separate border-spacing-0 font-['Liberation_Sans',Arial,sans-serif] text-[21px] leading-[26px] text-black">
        <colgroup>
          <col className="w-[46px]" />
          <col className="w-[170px]" />
          <col className="w-[138px]" />
          <col className="w-[132px]" />
          <col className="w-[280px]" />
          <col className="w-[168px]" />
          <col className="w-[166px]" />
          <col className="w-[112px]" />
          <col className="w-[184px]" />
          {letters.slice(8).map((l) => (
            <col key={l} className="w-[100px]" />
          ))}
          <col />
        </colgroup>
        <thead>
          <tr className="font-['Inter']">
            <td className="h-[44px] border-r-2 border-b-2 border-[#bdbdbd] bg-[#fafafa] p-0">
              <button aria-label="Select all" className="ml-[10px] block">
                <Svg w={30} h={30}>
                  <path d="M30 0v30H0z" fill="#dcdcdc" />
                </Svg>
              </button>
            </td>
            {letters.map((l) => (
              <th
                key={l}
                scope="col"
                className={
                  l === "J"
                    ? "h-[44px] border-r-2 border-b-4 border-r-[#e0e0e0] border-b-[#1e7145] bg-[#f0f0f0] text-[21px] font-normal text-[#1e7145]"
                    : "h-[44px] border-r-2 border-b-2 border-r-[#e0e0e0] border-b-[#bdbdbd] bg-linear-to-b from-[#fdfdfd] to-[#f7f7f7] text-[21px] font-normal text-[#555]"
                }
              >
                {l}
              </th>
            ))}
            <td className="border-b-2 border-[#bdbdbd] bg-[#fafafa]" />
          </tr>
        </thead>
        <tbody>
          <tr>
            <RowNumber n={1} className="h-[54px]" />
            <td colSpan={8} className="border-b-2 border-[#a5a5a5] text-center align-middle text-[24px]">
              InvoicePayments2023_CSV
            </td>
            <td colSpan={15} />
          </tr>
          <tr>
            <RowNumber n={2} />
            {fields.map((f) => (
              <th
                key={f}
                scope="col"
                className="h-10 border-r-2 border-b-2 border-r-[#a5a5a5] border-b-[#3f3f3f] bg-[#bdbfbe] p-0 align-top text-[20px] font-bold"
              >
                <div className="flex h-[38px] items-start pl-1">
                  <span className="min-w-0 flex-1 overflow-hidden text-left whitespace-nowrap">{f}</span>
                  <button
                    aria-label={`Filter ${f}`}
                    className="mt-0.5 flex h-[34px] w-[33px] shrink-0 items-center justify-center rounded-[2px] border-2 border-[#737373] bg-linear-to-b from-white to-[#e8e8e8]"
                  >
                    <Svg w={18} h={12}>
                      <path d="M0 0h18L9 12z" fill="#757575" />
                    </Svg>
                  </button>
                </div>
              </th>
            ))}
            <td colSpan={15} />
          </tr>
          {invoices.map(([id, customer, name, amount, terms, paid, payment], i) => (
            <tr key={id}>
              <RowNumber n={i + 3} />
              <th
                scope="row"
                className="h-10 overflow-hidden border-r-2 border-b-2 border-r-[#3f3f3f] border-b-[#a5a5a5] bg-[#dbdbdb] pr-[5px] text-right align-top font-bold"
              >
                {id}
              </th>
              <td className={left}>1/1/2023</td>
              <td className={right}>{customer}</td>
              <td className={`${left} text-[20px]`}>{name}</td>
              <td className={right}>{amount}</td>
              <td className={left}>{terms}</td>
              <td className={left}>{paid}</td>
              <td className={right}>{payment}</td>
              <td />
              {i === 12 ? (
                <td className="relative p-0">
                  <div className="absolute -top-1 -right-0.5 -bottom-0.5 -left-1 border-4 border-[#1e7145]">
                    <span className="absolute -right-[6px] -bottom-[6px] size-3 border-2 border-white bg-[#1e7145]" />
                  </div>
                </td>
              ) : (
                <td />
              )}
              <td colSpan={13} />
            </tr>
          ))}
        </tbody>
      </table>
    </div>
  );
}

/* ------------------------------------------------------------------ */
/* Sheet tabs and status bar                                           */
/* ------------------------------------------------------------------ */

function SheetTabs() {
  return (
    <div className="flex h-[54px] shrink-0 items-start border-t-2 border-b-2 border-t-[#cfcfcf] border-b-[#9c9c9c] bg-[#eeeeee] text-[24px] text-[#606060]">
      <div className="flex h-[50px] w-[121px] items-center gap-8 pl-[30px]">
        <button aria-label="Previous sheet">
          <Svg w={14} h={20}>
            <path d="M14 0v20L0 10z" fill="#b3b3b3" />
          </Svg>
        </button>
        <button aria-label="Next sheet">
          <Svg w={14} h={20}>
            <path d="M0 0v20l14-10z" fill="#b3b3b3" />
          </Svg>
        </button>
      </div>
      <button className="h-[43px] w-[479px] rounded-b-[6px] bg-white pt-[3px] font-semibold text-[#23834f] shadow-[0_2px_1px_#a0a0a0,-1px_0_1px_#cfcfcf,1px_0_1px_#cfcfcf]">
        Sheet 1 - InvoicePayments2023_C
      </button>
      {["1", "Sheet2", "Sheet3", "Sheet4", "Sheet5"].map((s) => (
        <button key={s} className="h-[42px] w-[158px] border-r-2 border-[#cccccc] pt-[3px]">
          {s}
        </button>
      ))}
      <button aria-label="Add sheet" className="flex h-[42px] w-[76px] items-center justify-center border-r-2 border-[#cccccc] pt-1">
        <Svg w={20} h={20}>
          <path d="M10 0v20M0 10h20" stroke="#5c5c5c" strokeWidth="4" />
        </Svg>
      </button>
    </div>
  );
}

function StatusBar() {
  return (
    <div className="flex h-[44px] shrink-0 items-center bg-linear-to-b from-[#dedede] to-[#bfbfbf] pr-[47px] pl-12 text-[24px] text-[#4a4a4a]">
      <span>Ready</span>
      <button className="ml-[38px] flex items-center gap-0.5">
        <Svg w={34} h={32}>
          <circle cx="15" cy="5" r="3.500" stroke="#5a5a5a" strokeWidth="2.200" />
          <path
            d="M19 13l7-3c3-1.500 2-6-1.500-4.500L18 8h-6L5 5.500C2 4.500 1 8.500 4 10l6 3v7L6 27c-1 3 3 5 4.500 2l3-6"
            stroke="#5a5a5a"
            strokeWidth="2.200"
          />
          <path d="M18 14v6M16 24l6 6L33 17" stroke="#5a5a5a" strokeWidth="2.200" />
        </Svg>
        Accessibility: Good to go
      </button>
      <div className="ml-auto flex items-center">
        <button aria-label="Normal view" className="flex h-[44px] w-[74px] items-center justify-center bg-[#989898]">
          <Svg w={28} h={28}>
            <path d="M2 2h24v24H2zM10 2v24M18 2v24M2 10h24M2 18h24" stroke="#fff" strokeWidth="2.400" />
          </Svg>
        </button>
        <button aria-label="Page layout view" className="flex h-[44px] w-[70px] items-center justify-center">
          <Svg w={30} h={28}>
            <path d="M2 2h26v24H2zM8 6h14v16H8zM11 10h8M11 14h8M11 18h8" stroke="#5a5a5a" strokeWidth="2.200" />
          </Svg>
        </button>
        <button aria-label="Page break view" className="flex h-[44px] w-[72px] items-center justify-center">
          <Svg w={30} h={28}>
            <path d="M2 2h26v24H2zM2 16h17V2M10 2v14" stroke="#5a5a5a" strokeWidth="2.200" />
          </Svg>
        </button>
        <button aria-label="Zoom out" className="ml-4">
          <Svg w={16} h={16}>
            <path d="M0 8h16" stroke="#5a5a5a" strokeWidth="4" />
          </Svg>
        </button>
        <input
          type="range"
          aria-label="Zoom"
          defaultValue={50}
          className="mx-[14px] h-8 w-[200px] appearance-none bg-transparent [&::-webkit-slider-runnable-track]:h-2 [&::-webkit-slider-runnable-track]:rounded-full [&::-webkit-slider-runnable-track]:bg-[#8c8c8c] [&::-webkit-slider-thumb]:-mt-3 [&::-webkit-slider-thumb]:size-8 [&::-webkit-slider-thumb]:appearance-none [&::-webkit-slider-thumb]:rounded-full [&::-webkit-slider-thumb]:bg-[#f0f0f0] [&::-webkit-slider-thumb]:shadow-[0_1px_3px_#666]"
        />
        <button aria-label="Zoom in">
          <Svg w={16} h={16}>
            <path d="M0 8h16M8 0v16" stroke="#5a5a5a" strokeWidth="4" />
          </Svg>
        </button>
        <output className="ml-[35px]">100%</output>
      </div>
    </div>
  );
}

/* ------------------------------------------------------------------ */
/* Dock                                                                */
/* ------------------------------------------------------------------ */

function Grad({ id, a, b }: { id: string; a: string; b: string }) {
  return (
    <linearGradient id={id} x1="0" y1="0" x2="0" y2="1">
      <stop offset="0" stopColor={a} />
      <stop offset="1" stopColor={b} />
    </linearGradient>
  );
}

function Tile({ id, a, b, children }: Kids & { id: string; a: string; b: string }) {
  return (
    <Svg w={71} h={71} vb="0 0 100 100">
      <defs>
        <Grad id={id} a={a} b={b} />
        <clipPath id={`${id}-clip`}>
          <rect width="100" height="100" rx="23" />
        </clipPath>
      </defs>
      <g clipPath={`url(#${id}-clip)`}>
        <rect width="100" height="100" fill={`url(#${id})`} />
        {children}
      </g>
    </Svg>
  );
}

function Compass({ id }: { id: string }) {
  return (
    <Tile id={id} a="#ffffff" b="#d5d5d5">
      <defs>
        <Grad id={`${id}-face`} a="#1fa9f0" b="#1a70e4" />
      </defs>
      <circle cx="50" cy="50" r="43.500" fill={`url(#${id}-face)`} />
      <circle cx="50" cy="50" r="38.500" stroke="#fff" strokeWidth="6" strokeDasharray="1.200 2.160" opacity="0.750" />
      <path d="M81 24L46 46l8 8z" fill="#fa4338" />
      <path d="M22 75l32-21-8-8z" fill="#fff" />
    </Tile>
  );
}

const launchpad: [string, string][] = [
  ["#6ff56a", "#12cc3c"],
  ["#fdd33c", "#fba426"],
  ["#fb9e26", "#ee7420"],
  ["#fb3030", "#bd0505"],
  ["#c8d2da", "#7f8285"],
  ["#fb2f5c", "#fb4d66"],
  ["#bb52e8", "#7f30b8"],
  ["#05c4fb", "#1a6df2"],
  ["#48dcc8", "#0fb573"],
];
const petals = ["#ff9a1e", "#f5d90c", "#a5cf3a", "#3fb878", "#4ca4e0", "#7c7fd0", "#c76ab0", "#fb4a44"];

function OfficeTile({ id, letter, dark, children }: Kids & { id: string; letter: string; dark: string }) {
  return (
    <Tile id={id} a="#ffffff" b="#ffffff">
      {children}
      <rect x="9" y="31" width="37" height="38" rx="4" fill={dark} />
      <text x="27.500" y="60" textAnchor="middle" fontSize="28" fontWeight="700" fill="#fff" fontFamily="Open Sans">
        {letter}
      </text>
    </Tile>
  );
}

type DockItem = { name: string; icon: React.ReactNode; running?: boolean; badge?: string };

const apps: DockItem[] = [
  {
    name: "Finder",
    running: true,
    icon: (
      <Tile id="finder" a="#05c8fb" b="#1e6cf2">
        <path d="M55 0h45v100H62c-3-12-5-26-5-42H42C43 36 47 16 55 0z" fill="#e5eaf1" />
        <path d="M26 29v9M73 29v9" stroke="#1a1f2b" strokeWidth="4.500" />
        <path d="M19 66c18 18 44 18 62 0" stroke="#1a1f2b" strokeWidth="3" strokeLinecap="round" />
      </Tile>
    ),
  },
  {
    name: "Launchpad",
    icon: (
      <Tile id="launchpad" a="#d6caee" b="#cdc0e6">
        {launchpad.map(([a, b], i) => (
          <g key={a}>
            <Grad id={`launchpad-${i}`} a={a} b={b} />
            <rect
              x={16 + (i % 3) * 24.5}
              y={17 + Math.floor(i / 3) * 24.5}
              width="19"
              height="19"
              rx="4"
              fill={`url(#launchpad-${i})`}
            />
          </g>
        ))}
      </Tile>
    ),
  },
  { name: "Safari", running: true, icon: <Compass id="safari" /> },
  {
    name: "Mail",
    icon: (
      <Tile id="mail" a="#1a6df0" b="#05c5fb">
        <defs>
          <Grad id="envelope" a="#fafafa" b="#dcdcde" />
        </defs>
        <rect x="14.500" y="28" width="71" height="45" rx="4" fill="url(#envelope)" />
        <path d="M17 30l26 26c4 4 10 4 14 0l26-26M16 71l20-20M84 71L64 51" stroke="#a3a5a9" strokeWidth="2" />
      </Tile>
    ),
  },
  {
    name: "FaceTime",
    icon: (
      <Tile id="facetime" a="#5ff77c" b="#08bf33">
        <defs>
          <Grad id="camera" a="#ffffff" b="#cdebd0" />
        </defs>
        <rect x="14" y="28" width="50" height="44" rx="12" fill="url(#camera)" />
        <path d="M67 45l14-13c2-1.500 4-1 4 1.500v33c0 2.500-2 3-4 1.500L67 55z" fill="#d5edd8" />
      </Tile>
    ),
  },
  {
    name: "Messages",
    running: true,
    badge: "445",
    icon: (
      <Tile id="messages" a="#5ff77c" b="#08bf33">
        <defs>
          <Grad id="bubble" a="#ffffff" b="#c5ecc6" />
        </defs>
        <path
          d="M50 17c21 0 37 13 37 31S71 79 50 79c-5 0-9-.5-12-2-3 3-7 5-12 6 2-3 4-6 3-10C19 68 13 59 13 48c0-18 16-31 37-31z"
          fill="url(#bubble)"
        />
      </Tile>
    ),
  },
  {
    name: "Maps",
    icon: (
      <Tile id="maps" a="#4ed964" b="#4ed964">
        <path d="M0 0h28v100H0z" fill="#f1f1f4" />
        <path d="M0 62l24 38H0z" fill="#f48bd0" />
        <path d="M0 0h24v40L0 60z" fill="#5ccb6c" />
        <path d="M50 40l50 46v14H28V40z" fill="#f4f4f6" />
        <path d="M52 100l24-22 22 22z" fill="#fcc92d" />
        <path d="M24 0h26v60H24z" fill="#0d7bf5" />
        <circle cx="100" cy="2" r="38" stroke="#e9e9ee" strokeWidth="10" />
        <circle cx="38" cy="62" r="25" fill="#fff" />
        <circle cx="38" cy="62" r="21" fill="#1a7df5" />
        <path d="M38 46l11 28-11-6-11 6z" fill="#fff" />
      </Tile>
    ),
  },
  {
    name: "Photos",
    icon: (
      <Tile id="photos" a="#ffffff" b="#f6f6f6">
        {petals.map((c, i) => (
          <rect key={c} x="37" y="7" width="26" height="41" rx="13" fill={c} opacity="0.850" transform={`rotate(${i * 45} 50 50)`} />
        ))}
      </Tile>
    ),
  },
  {
    name: "Contacts",
    icon: (
      <Svg w={75} h={71} vb="0 0 105 100">
        <path d="M94 14h8a3 3 0 0 1 3 3v18H94z" fill="#a9adb2" />
        <path d="M94 35h11v19H94z" fill="#4cc3f0" />
        <path d="M94 54h11v18H94z" fill="#fb9226" />
        <path d="M94 72h11v12a3 3 0 0 1-3 3h-8z" fill="#45d266" />
        <rect width="100" height="100" rx="22" fill="#a87d45" />
        <path d="M0 22Q0 4 8 3v94Q0 96 0 78z" fill="#8e6736" />
        <circle cx="53" cy="50" r="30" stroke="#8a6334" strokeWidth="3" />
        <circle cx="53" cy="43" r="11" fill="#8a6334" />
        <path d="M32 69c4-13 38-13 42 0-9 13-33 13-42 0z" fill="#8a6334" />
      </Svg>
    ),
  },
  {
    name: "Calendar",
    icon: (
      <Tile id="calendar" a="#ffffff" b="#efefef">
        <path d="M0 0h100v31H0z" fill="#fa5548" />
        <text x="50" y="23" textAnchor="middle" fontSize="19" fontWeight="600" fill="#fff" fontFamily="Inter">
          NOV
        </text>
        <text x="50" y="84" textAnchor="middle" fontSize="58" fontWeight="300" fill="#222" fontFamily="Inter">
          8
        </text>
      </Tile>
    ),
  },
  {
    name: "Reminders",
    icon: (
      <Tile id="reminders" a="#ffffff" b="#f1f1f1">
        {["#0f7bfb", "#fb3b30", "#fb9513"].map((c, i) => (
          <g key={c}>
            <circle cx="20" cy={25 + i * 25} r="8" stroke={c} strokeWidth="2" />
            <circle cx="20" cy={25 + i * 25} r="5.500" fill={c} />
            <path d={`M37 ${25 + i * 25}h53`} stroke="#b9b9bb" strokeWidth="2" />
          </g>
        ))}
      </Tile>
    ),
  },
  {
    name: "Notes",
    running: true,
    icon: (
      <Tile id="notes" a="#fdfdfd" b="#e8e6e2">
        <path d="M0 0h100v25H0z" fill="#fdce35" />
        <path d="M0 26h100" stroke="#b8a060" strokeWidth="2" />
        <path d="M0 30h100" stroke="#c0c0c0" strokeWidth="2.500" strokeDasharray="2 2" />
        <path d="M0 50h100M0 75h100" stroke="#d3d3d3" strokeWidth="2" />
      </Tile>
    ),
  },
  {
    name: "Music",
    icon: (
      <Tile id="music" a="#fb5a74" b="#fb233b">
        <path d="M35 24l38-9v52c0 12-19 12-19 2 0-8 9-8 13-10V33l-26 6v35c0 12-21 13-21 2 0-8 10-9 15-10z" fill="#fff" />
      </Tile>
    ),
  },
  {
    name: "Podcasts",
    running: true,
    icon: (
      <Tile id="podcasts" a="#c860f0" b="#7220b8">
        <path d="M35 76a34 34 0 1 1 30 0" stroke="#fff" strokeWidth="5" />
        <path d="M37 62a21 21 0 1 1 26 0" stroke="#fff" strokeWidth="5" />
        <circle cx="50" cy="44" r="8.500" fill="#fff" />
        <path d="M42 61c0-6 16-6 16 0 0 8-2 18-4 25-1 3-7 3-8 0-2-7-4-17-4-25z" fill="#fff" />
      </Tile>
    ),
  },
  {
    name: "TV",
    icon: (
      <Tile id="tv" a="#2d3b38" b="#0c0f10">
        <FaApple x={12} y={29} size={36} color="#fff" />
        <text x="66" y="64" textAnchor="middle" fontSize="38" fontWeight="500" fill="#fff" fontFamily="Inter">
          tv
        </text>
      </Tile>
    ),
  },
  {
    name: "News",
    icon: (
      <Tile id="news" a="#ffffff" b="#ffffff">
        <path d="M21 25a4 4 0 0 1 4-4h13l42 55v0a4 4 0 0 1-4 4H63L21 26z" fill="#fb3257" />
        <path d="M54 21h26v32zM21 46v33h26z" fill="#fb3257" />
      </Tile>
    ),
  },
  {
    name: "Numbers",
    icon: (
      <Tile id="numbers" a="#6ef56a" b="#0fcb3a">
        <path d="M24 69v14M41 52v31M59 20v63M76 38v45" stroke="#f4faf4" strokeWidth="12" strokeLinecap="round" />
      </Tile>
    ),
  },
  {
    name: "Pages",
    icon: (
      <Tile id="pages" a="#ffb038" b="#fb8326">
        <path d="M16 84h68" stroke="#ffd9ae" strokeWidth="3" strokeLinecap="round" />
        <path d="M81 18c3 3 2 8-1 13L34 76l-16 8 7-16 46-46c3-4 7-7 10-4z" fill="#f3f0ec" stroke="#c88a50" strokeWidth="1" />
        <path d="M50 46l6 8" stroke="#555" strokeWidth="2" />
      </Tile>
    ),
  },
  {
    name: "App Store",
    icon: (
      <Tile id="appstore" a="#12b5fb" b="#1259e0">
        <path d="M57 21L30 69M44 21l32 55M17 61h39M69 61h15M25 76l-2 3" stroke="#fff" strokeWidth="8" strokeLinecap="round" />
      </Tile>
    ),
  },
  {
    name: "System Preferences",
    badge: "1",
    icon: (
      <Tile id="settings" a="#d5e1e7" b="#8b8b88">
        <circle cx="50" cy="50" r="42" fill="#222628" />
        <circle cx="50" cy="50" r="41" stroke="#8a9194" strokeWidth="4" strokeDasharray="2 2" />
        <circle cx="50" cy="50" r="33" stroke="#b7bcbe" strokeWidth="5" />
        <circle cx="50" cy="50" r="22" stroke="#42474a" strokeWidth="10" />
        <path d="M53 50h30M48 48L33 22M48 52L33 78" stroke="#b7bcbe" strokeWidth="5" />
        <circle cx="50" cy="50" r="8" fill="#54595c" stroke="#b7bcbe" strokeWidth="4" />
      </Tile>
    ),
  },
];

const openApps: DockItem[] = [
  {
    name: "VPN",
    icon: (
      <Svg w={76} h={88}>
        <defs>
          <radialGradient id="globe" cx="0.400" cy="0.300" r="0.800">
            <stop offset="0" stopColor="#b8e4ff" />
            <stop offset="0.600" stopColor="#5db2f7" />
            <stop offset="1" stopColor="#2f7ad6" />
          </radialGradient>
        </defs>
        <ellipse cx="34" cy="81" rx="34" ry="5" fill="#b04fd8" opacity="0.500" />
        <circle cx="34" cy="33" r="32" fill="url(#globe)" />
        <path
          d="M8 22c8-14 20-18 28-14 0 7-9 8-12 12 0 4-7 5-8 10 4 4 12 5 12 12-1 7-6 12-8 18-4-6-4-14-9-19-3-5-5-12-3-19zM42 8c10 2 17 8 21 16-6 0-12-5-18-6-4-3-6-7-3-10zM46 28c7-3 14 2 18 8-1 6-5 14-9 18-3-6-2-12-7-16-3-3-4-7-2-10z"
          fill="#2f86dd"
          opacity="0.800"
        />
        <path d="M11 79h46" stroke="#9aa0a5" strokeWidth="8" />
        <path d="M31 66h7v8h6v10H24V74h7z" fill="#fb9a30" stroke="#d9730f" />
        <path d="M56 34v-8c0-13 15-13 15 0v8" stroke="#b9b4a8" strokeWidth="4" />
        <rect x="51" y="32" width="24" height="20" rx="2" fill="#efa04a" stroke="#b86a1c" />
        <path d="M52 38h22M52 42h22M52 46h22" stroke="#d98430" strokeWidth="1.500" />
      </Svg>
    ),
  },
  {
    name: "Excel",
    running: true,
    icon: (
      <OfficeTile id="excel" letter="X" dark="#107c41">
        <path d="M26 16h57v17H26z" fill="#21a366" />
        <path d="M55 16h28v17H55z" fill="#33c481" />
        <path d="M26 33h57v17H26z" fill="#107c41" />
        <path d="M55 33h28v17H55z" fill="#21a366" />
        <path d="M26 50h57v17H26z" fill="#185c37" />
        <path d="M55 50h28v17H55z" fill="#107c41" />
        <path d="M26 67h57v15H26z" fill="#185c37" />
      </OfficeTile>
    ),
  },
  {
    name: "PowerPoint",
    running: true,
    icon: (
      <OfficeTile id="powerpoint" letter="P" dark="#c43e1c">
        <circle cx="53" cy="49" r="33" fill="#ed6c47" />
        <path d="M53 16a33 33 0 0 1 33 33H53z" fill="#ff8f6b" />
        <path d="M20 49h66a33 33 0 0 1-66 0z" fill="#d35230" />
      </OfficeTile>
    ),
  },
  {
    name: "Word",
    running: true,
    icon: (
      <OfficeTile id="word" letter="W" dark="#185abd">
        <path d="M26 16h57v17H26z" fill="#41a5ee" />
        <path d="M26 33h57v17H26z" fill="#2b7cd3" />
        <path d="M26 50h57v17H26z" fill="#185abd" />
        <path d="M26 67h57v15H26z" fill="#103f91" />
      </OfficeTile>
    ),
  },
  {
    name: "GMX",
    running: true,
    icon: (
      <Svg w={88} h={88}>
        <path d="M0 0h88v88H0z" fill="#08222f" />
        <path d="M2 2h84v58H2z" fill="#0b2a44" />
        <circle cx="60" cy="34" r="26" fill="#1b3a66" />
        <path d="M14 2h14L3 46V22z" fill="#fdc02f" />
        <path d="M40 2h18L3 66V52z" fill="#fb9028" />
        <path d="M72 2h14v12L3 70v-5z" fill="#f3642a" />
        <text x="44" y="83" textAnchor="middle" fontSize="24" fill="#fff" fontFamily="Open Sans">
          GMX
        </text>
      </Svg>
    ),
  },
  {
    name: "Safari on phone",
    icon: (
      <span className="relative">
        <Compass id="safari2" />
        <span className="absolute -top-2 -right-3 flex size-[34px] items-center justify-center rounded-full bg-[#dedce3]">
          <Svg w={14} h={22}>
            <rect x="1" y="1" width="12" height="20" rx="2" fill="#aaa" stroke="#111" strokeWidth="2" />
            <path d="M1 3h12M1 19h12" stroke="#111" strokeWidth="3" />
          </Svg>
        </span>
      </span>
    ),
  },
];

const shelf: DockItem[] = [
  {
    name: "Documents",
    icon: (
      <Svg w={60} h={80}>
        <path d="M1 2h40l18 22v55H1z" fill="#ebebeb" />
        {Array.from({ length: 17 }, (_, i) => (
          <path key={i} d={`M3 ${8 + i * 4}h54`} stroke="#b2b2b2" strokeWidth="1.500" strokeDasharray="9 2 6 2" />
        ))}
        <path d="M41 0l18 4v22l-14-2z" fill="#2b9ca5" />
        <path d="M37 0c6 8 8 14 3 23 6-1 12 0 19 3C56 16 48 6 37 0z" fill="#fafafa" stroke="#c8c8c8" />
        <path d="M12 60h36v14H12z" fill="#e4e4e4" />
        <text x="30" y="73" textAnchor="middle" fontSize="13" fill="#6b6b6b" fontFamily="Inter">
          XLSX
        </text>
      </Svg>
    ),
  },
  {
    name: "Minimized window",
    icon: (
      <Svg w={82} h={16}>
        <rect width="82" height="16" rx="3" fill="#f2f0f4" />
        <circle cx="4" cy="3" r="1.500" fill="#d04030" />
        <circle cx="8" cy="3" r="1.500" fill="#e0a020" />
        <circle cx="6" cy="10" r="3" fill="#59666d" />
        <path d="M12 5h22" stroke="#888" strokeWidth="1.500" />
        <path d="M12 8.500h56" stroke="#a9cdf2" strokeWidth="2.500" />
        <circle cx="78" cy="8.500" r="1.500" fill="#777" />
      </Svg>
    ),
  },
  {
    name: "Trash",
    icon: (
      <Svg w={64} h={84}>
        <path d="M4 14l8-9 6 5 8-9 10 7 8-6 8 9 8 4-4 8H6z" fill="#f2f2f2" stroke="#9a9a9a" />
        <path d="M14 8l6 8 8-6M38 6l4 10 8-4M24 4l4 8" stroke="#444" strokeWidth="2" />
        <path d="M20 10l5 5M44 9l5 3" stroke="#3ab0b8" strokeWidth="3" />
        <path d="M1 14c10 8 52 8 62 0l-7 62c-2 9-46 9-48 0z" fill="#e0e0e2" />
        <path d="M1 14c10 8 52 8 62 0" stroke="#fafafa" strokeWidth="3" />
        <path d="M18 28c4 16 0 30 3 44M40 26c-4 14 4 30-1 46" stroke="#f0f0f0" strokeWidth="6" opacity="0.600" />
      </Svg>
    ),
  },
];

function DockIcons({ items }: { items: DockItem[] }) {
  return (
    <>
      {items.map((item) => (
        <button key={item.name} aria-label={item.name} className="relative flex w-[91px] shrink-0 flex-col items-center">
          <span className="flex h-[102px] items-center">{item.icon}</span>
          {item.badge && (
            <span
              className={
                item.badge.length > 1
                  ? "absolute top-[6px] right-0 flex h-[34px] w-[42px] items-center justify-center rounded-full bg-[#fb3d38] text-[19px] text-white"
                  : "absolute top-[6px] right-0 flex size-[34px] items-center justify-center rounded-full bg-[#fb3d38] text-[19px] text-white"
              }
            >
              {item.badge}
            </span>
          )}
          {item.running && <span className="absolute bottom-0.5 size-2 rounded-full bg-[#12005c]" />}
        </button>
      ))}
    </>
  );
}

function Dock() {
  return (
    <nav
      aria-label="Dock"
      className="mx-auto mt-1 mb-[10px] flex h-[110px] w-fit shrink-0 rounded-[32px] border-2 border-white/25 bg-[linear-gradient(90deg,#8259cf_0%,#745bc8_22%,#7859d2_32%,#8c57f0_40%,#9156f2_52%,#b955f8_63%,#c254f8_72%,#a855f8_88%,#9a58f8_100%)] px-1"
    >
      <DockIcons items={apps} />
      <span className="mx-[19px] my-3 w-0.5 bg-[#7a28b8]" />
      <DockIcons items={openApps} />
      <span className="mx-[19px] my-3 w-0.5 bg-[#7a28b8]" />
      <DockIcons items={shelf} />
    </nav>
  );
}

/* ------------------------------------------------------------------ */

export default function App() {
  return (
    <div className="flex h-screen flex-col overflow-hidden bg-[linear-gradient(100deg,#35148c_0%,#1d0d5c_25%,#24107a_42%,#4009a5_52%,#6b00c9_66%,#5208d8_100%)] font-['Inter','Liberation_Sans',sans-serif]">
      <MenuBar />
      <main className="relative min-h-0 flex-1 pt-0.5 pr-[76px]">
        <div className="absolute inset-x-0 top-0 h-8 bg-linear-to-r from-[#b8289c] via-[#8a8f98] to-[#d0488c]" />
        <section
          aria-label="Background window"
          className="absolute top-0.5 right-0 bottom-4 left-1/2 overflow-hidden rounded-[24px] bg-[#fbfbfb]"
        >
          <div className="flex h-[162px] justify-end border-b-2 border-[#d3cfd5] bg-[#e8e3ea] pt-8 pr-[38px]">
            <Svg w={36} h={36} label="Tabs">
              <path d="M8 25H5a4 4 0 0 1-4-4V5a4 4 0 0 1 4-4h17a4 4 0 0 1 4 4v3" stroke="#a59fa8" strokeWidth="2.200" />
              <rect x="9" y="9" width="26" height="26" rx="4" stroke="#a59fa8" strokeWidth="2.200" />
            </Svg>
          </div>
        </section>
        <section
          aria-label="Excel"
          className="relative flex h-full flex-col overflow-hidden rounded-[20px] bg-[#f2f2f2] shadow-[0_12px_40px_rgba(0,0,0,0.45)]"
        >
          <TitleBar />
          <RibbonTabs />
          <RibbonGroups />
          <FormulaBar />
          <Sheet />
          <SheetTabs />
          <StatusBar />
        </section>
      </main>
      <Dock />
    </div>
  );
}
